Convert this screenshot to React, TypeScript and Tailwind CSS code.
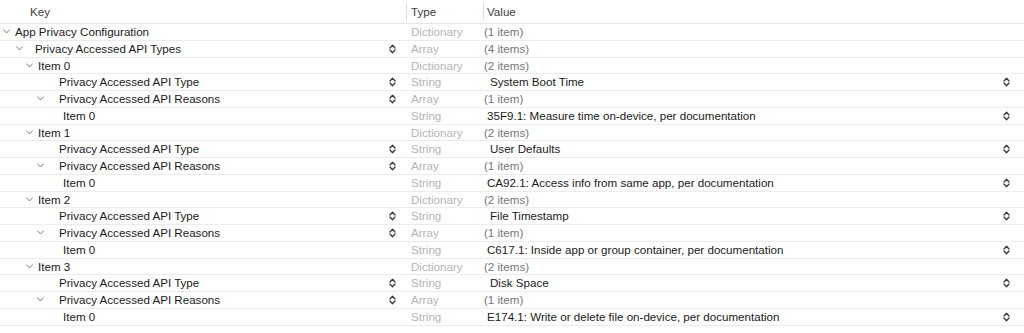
import React from 'react';

type Row = {
    key: string;
    pad: string;
    gap?: string;
    chevron?: boolean;
    keyStepper?: boolean;
    type: string;
    value: string;
    kind: 'count' | 'popup' | 'string';
};

const items = [
    { type: 'System Boot Time', reason: '35F9.1: Measure time on-device, per documentation' },
    { type: 'User Defaults', reason: 'CA92.1: Access info from same app, per documentation' },
    { type: 'File Timestamp', reason: 'C617.1: Inside app or group container, per documentation' },
    { type: 'Disk Space', reason: 'E174.1: Write or delete file on-device, per documentation' },
];

const rows: Row[] = [
    { key: 'App Privacy Configuration', pad: 'pl-[3px]', gap: 'ml-[5px]', chevron: true, type: 'Dictionary', value: '(1 item)', kind: 'count' },
    { key: 'Privacy Accessed API Types', pad: 'pl-[16px]', gap: 'ml-[12px]', chevron: true, keyStepper: true, type: 'Array', value: '(4 items)', kind: 'count' },
];

items.forEach((item, i) => {
    rows.push(
        { key: `Item ${i}`, pad: 'pl-[26px]', gap: 'ml-[5px]', chevron: true, type: 'Dictionary', value: '(2 items)', kind: 'count' },
        { key: 'Privacy Accessed API Type', pad: 'pl-[59px]', keyStepper: true, type: 'String', value: item.type, kind: 'popup' },
        { key: 'Privacy Accessed API Reasons', pad: 'pl-[37px]', gap: 'ml-[15px]', chevron: true, keyStepper: true, type: 'Array', value: '(1 item)', kind: 'count' },
        { key: 'Item 0', pad: 'pl-[63px]', type: 'String', value: item.reason, kind: 'string' },
    );
});

function Disclosure() {
    return (
        <svg width="7" height="5" viewBox="0 0 7 5" className="shrink-0">
            <polyline points="0.5,0.8 3.5,4 6.5,0.8" fill="none" stroke="#7a7a7a" strokeWidth="1" strokeLinecap="round" strokeLinejoin="round" />
        </svg>
    );
}

function Stepper() {
    return (
        <svg width="7" height="10" viewBox="0 0 7 10" className="shrink-0">
            <polyline points="1,4 3.5,1.3 6,4" fill="none" stroke="#3a3a3a" strokeWidth="1.3" strokeLinecap="round" strokeLinejoin="round" />
            <polyline points="1,6 3.5,8.7 6,6" fill="none" stroke="#3a3a3a" strokeWidth="1.3" strokeLinecap="round" strokeLinejoin="round" />
        </svg>
    );
}

export default function App() {
    return (
        <div className="w-[1024px] h-[333px] bg-white overflow-hidden text-[11.6px] leading-none text-[#1a1a1a]" style={{ fontFamily: '"Liberation Sans", Arial, sans-serif' }}>
            <div className="grid grid-cols-[406px_77px_1fr] h-[24px] border-b border-[#e4e4e4] text-[#3c3c3c]">
                <div className="flex items-center pl-[30px]">Key</div>
                <div className="flex items-center">
                    <span className="w-px h-[17px] bg-[#dcdcdc]" />
                    <span className="ml-[4px]">Type</span>
                </div>
                <div className="flex items-center">
                    <span className="w-px h-[17px] bg-[#dcdcdc]" />
                    <span className="ml-[3px]">Value</span>
                </div>
            </div>

            {rows.map((r, i) => (
                <div key={i} className="grid grid-cols-[406px_77px_1fr] h-[16.75px] border-b border-[#ececec]">
                    <div className={`flex items-center pr-[10px] ${r.pad}`}>
                        {r.chevron && <Disclosure />}
                        <span className={r.gap ?? ''}>{r.key}</span>
                        {r.keyStepper && <span className="ml-auto flex"><Stepper /></span>}
                    </div>
                    <div className="flex items-center pl-[5px] text-[#b4b4b4]">{r.type}</div>
                    {r.kind === 'count' && (
                        <div className="flex items-center pl-[1px] text-[#767676]">{r.value}</div>
                    )}
                    {r.kind === 'popup' && (
                        <div className="flex items-center pl-[7px] pr-[14px]">
                            <span>{r.value}</span>
                            <span className="ml-auto flex"><Stepper /></span>
                        </div>
                    )}
                    {r.kind === 'string' && (
                        <div className="flex items-center pl-[4px] pr-[14px]">
                            <span>{r.value}</span>
                            <span className="ml-auto flex"><Stepper /></span>
                        </div>
                    )}
                </div>
            ))}
        </div>
    );
}
